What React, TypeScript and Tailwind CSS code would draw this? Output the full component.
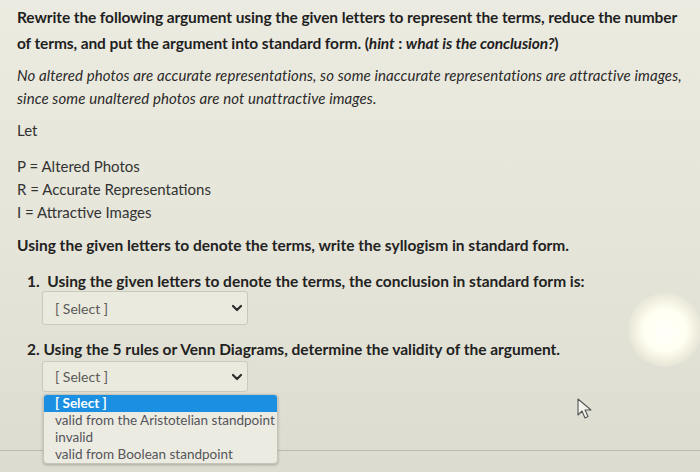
import React from "react";

const options = [
  "valid from the Aristotelian standpoint",
  "invalid",
  "valid from Boolean standpoint",
];

function Chevron() {
  return (
    <svg width="12" height="8" viewBox="0 0 12 8" className="text-[#2b2b2b]">
      <path d="M2 2l4 4 4-4" fill="none" stroke="currentColor" strokeWidth="2.2" strokeLinecap="round" strokeLinejoin="round" />
    </svg>
  );
}

function SelectBox({ className = "" }: { className?: string }) {
  return (
    <div className={`flex w-[206px] items-center justify-between rounded-[3px] border border-[#c9c9bd] bg-[#ebeadf] pl-[12px] pr-[4px] text-[14px] text-[#5a5a58] ${className}`}>
      <span>[ Select ]</span>
      <Chevron />
    </div>
  );
}

export default function App() {
  return (
    <div
      className="relative h-[472px] w-[700px] overflow-hidden bg-gradient-to-b from-[#ecebe1] via-[#e6e5d9] to-[#dcdcd0] text-[#2a2a2a]"
      style={{ fontFamily: "Lato, 'Open Sans', sans-serif" }}
    >
      <div className="flex flex-col px-[17px] pt-[4px]">
        <p className="text-[15.5px] font-bold leading-[26px] tracking-[-0.1px] text-[#1f1f1f]">
          Rewrite the following argument using the given letters to represent the terms, reduce the number of terms, and put the argument into standard form. (<i>hint</i> : <i>what is the conclusion?</i>)
        </p>
        <p className="mt-[8px] text-[15px] italic leading-[23px] tracking-[0.1px] text-[#2a2a2a]">
          No altered photos are accurate representations, so some inaccurate representations are attractive images, since some unaltered photos are not unattractive images.
        </p>
        <p className="mt-[8px] text-[15px] leading-[24px] text-[#333]">Let</p>
        <div className="mt-[13px] flex flex-col text-[15px] leading-[23px] text-[#333]">
          <span>P = Altered Photos</span>
          <span>R = Accurate Representations</span>
          <span>I = Attractive Images</span>
        </div>
        <p className="mt-[9px] text-[15.5px] font-bold leading-[24px] text-[#222]">
          Using the given letters to denote the terms, write the syllogism in standard form.
        </p>
        <div className="mt-[13px] pl-[10px]">
          <p className="text-[15.5px] font-bold leading-[22px] text-[#222]">
            1.&nbsp; Using the given letters to denote the terms, the conclusion in standard form is:
          </p>
          <SelectBox className="ml-[15px] mt-[-1px] h-[34px]" />
          <p className="mt-[13px] text-[15.5px] font-bold leading-[22px] text-[#222]">
            2. Using the 5 rules or Venn Diagrams, determine the validity of the argument.
          </p>
          <div className="relative ml-[15px] mt-[1px]">
            <SelectBox className="h-[31px]" />
            <div className="absolute left-[1px] top-[33px] z-10 w-[235px] overflow-hidden whitespace-nowrap rounded-[4px] border border-[#c4c4ba] bg-[#ecebe2] text-[13.5px] leading-[17px] text-[#55555a] shadow-[0_1px_3px_rgba(0,0,0,0.25)]">
              <div className="bg-[#1b8fe2] pl-[11px] font-bold text-white">[ Select ]</div>
              {options.map((o) => (
                <div key={o} className="pl-[11px]">{o}</div>
              ))}
            </div>
          </div>
        </div>
      </div>

      <div className="mt-[58px] h-px w-full bg-[#b9bab4]" />

      {/* glare from the photo */}
      <div className="pointer-events-none absolute left-[628px] top-[293px] h-[74px] w-[74px] rounded-full bg-[radial-gradient(circle,#fffffa_0%,#fffff2_40%,rgba(255,252,232,0.55)_58%,rgba(255,250,225,0)_75%)]" />

      {/* mouse cursor */}
      <svg className="absolute left-[577px] top-[398px]" width="16" height="22" viewBox="0 0 16 22">
        <path d="M1 1v16l4-4 3 7 3-1.4-3-6.6h6z" fill="#f4f4ee" stroke="#555" strokeWidth="1.1" strokeLinejoin="round" />
      </svg>
    </div>
  );
}
